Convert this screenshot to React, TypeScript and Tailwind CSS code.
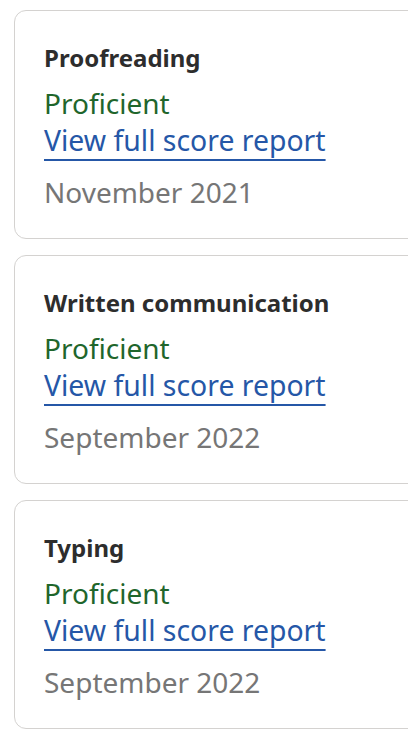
import React from "react";

const items = [
  { title: "Proofreading", date: "November 2021" },
  { title: "Written communication", date: "September 2022" },
  { title: "Typing", date: "September 2022" },
];

export default function App() {
  return (
    <div
      className="w-[408px] h-[740px] overflow-hidden bg-white pt-[10px] pl-[14px]"
      style={{ fontFamily: '"Noto Sans", sans-serif' }}
    >
      <div className="flex flex-col gap-[16px] w-[420px]">
        {items.map((it) => (
          <div
            key={it.title}
            className="h-[229px] rounded-[12px] border border-[#d4d2d0] pl-[29px] pt-[33px]"
          >
            <div className="text-[24px] leading-[28px] font-bold text-[#2d2d2d]">
              {it.title}
            </div>
            <div className="mt-[13px] text-[28px] leading-[37px] text-[#1f662c]">
              Proficient
            </div>
            <a
              href="#"
              className="block w-max text-[28.4px] leading-[37px] text-[#2557a7] underline decoration-[1.5px] underline-offset-[8px]"
            >
              View full score report
            </a>
            <div className="mt-[15px] text-[28px] leading-[37px] text-[#767676]">
              {it.date}
            </div>
          </div>
        ))}
      </div>
    </div>
  );
}
